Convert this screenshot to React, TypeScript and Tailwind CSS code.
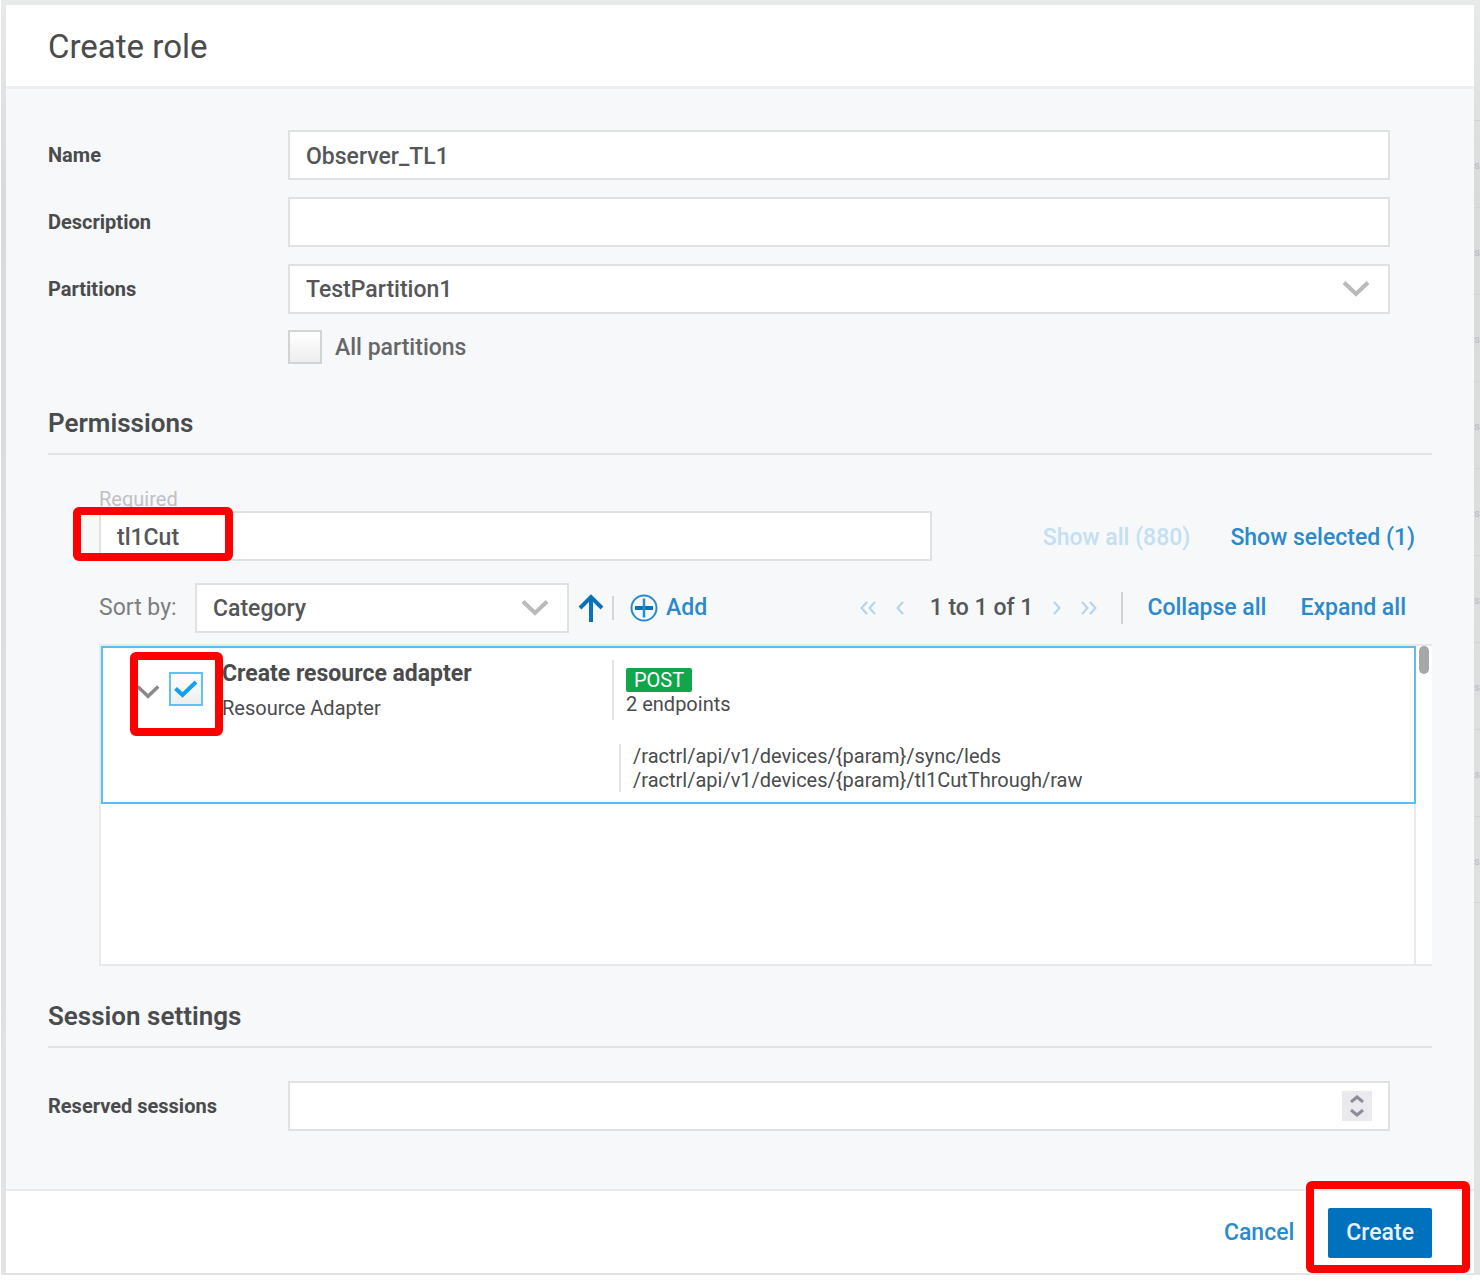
import { useState } from 'react';
import type { ReactNode } from 'react';

const endpoints = [
    '/ractrl/api/v1/devices/{param}/sync/leds',
    '/ractrl/api/v1/devices/{param}/tl1CutThrough/raw',
];

const fieldClass = 'block w-full h-[50px] px-4 pt-[2px] bg-white border-2 border-[#e0e1e1] text-[23px] outline-none';

function Chevron({ className }: { className: string }) {
    return (
        <svg viewBox="0 0 28 18" fill="none" stroke="currentColor" strokeWidth="4" className={className}>
            <path d="M2 2.5 L14 14 L26 2.5" />
        </svg>
    );
}

function Angles({ double = false, right = false }: { double?: boolean; right?: boolean }) {
    return (
        <svg
            viewBox={double ? '0 0 16 14' : '0 0 8 14'}
            fill="none"
            stroke="currentColor"
            strokeWidth="2"
            className={double ? 'w-4 h-[14px]' : 'w-2 h-[14px]'}
        >
            <g transform={right ? `translate(${double ? 16 : 8} 0) scale(-1 1)` : undefined}>
                <path d="M7 1 L1.5 7 L7 13" />
                {double && <path d="M15 1 L9.5 7 L15 13" />}
            </g>
        </svg>
    );
}

function Field({ id, label, children }: { id: string; label: string; children: ReactNode }) {
    return (
        <div className="flex items-center pr-[42px]">
            <label htmlFor={id} className="w-[240px] shrink-0 text-[20px] leading-6 font-bold text-[#4a4b4d]">{label}</label>
            <div className="relative grow">{children}</div>
        </div>
    );
}

function Checkbox({ id, checked, onChange }: { id: string; checked: boolean; onChange: (value: boolean) => void }) {
    return (
        <span className="relative block size-[34px] shrink-0">
            <input
                id={id}
                type="checkbox"
                checked={checked}
                onChange={e => onChange(e.target.checked)}
                className="block size-[34px] appearance-none border-2 border-[#d2d3d3] bg-linear-to-b from-white to-[#eeeeee] checked:border-[#62c0f5]"
            />
            {checked && (
                <svg viewBox="0 0 34 34" fill="none" stroke="#14a0f0" strokeWidth="4" className="absolute inset-0 pointer-events-none">
                    <path d="M6.5 16.5 L13.5 23 L27 10" />
                </svg>
            )}
        </span>
    );
}

function Highlight({ className }: { className: string }) {
    return <div className={`absolute border-8 border-[#ff0000] rounded-md pointer-events-none ${className}`} />;
}

export default function App() {
    const [name, setName] = useState('Observer_TL1');
    const [description, setDescription] = useState('');
    const [allPartitions, setAllPartitions] = useState(false);
    const [filter, setFilter] = useState('tl1Cut');
    const [selected, setSelected] = useState(true);
    const [sessions, setSessions] = useState('');

    return (
        <div className="bg-white pb-2 pl-px font-[Roboto,sans-serif] text-[23px] leading-7 font-medium text-[#555658]">
            <div className="relative bg-linear-to-b from-[#e8e9e9] via-[#d9dada] via-15% to-[#e2e3e3] pt-[5px] pb-[2px] pl-[5px] pr-[6px] overflow-hidden">
                {/* page rows that stick out behind the dialog */}
                <div className="absolute top-[120px] right-0 w-[6px]" aria-hidden="true">
                    {Array.from({ length: 9 }, (_, i) => (
                        <div key={i} className="h-[87px] pt-1 border-t border-[#d2d3d3] last:border-b flex items-center justify-center text-[11px] text-[#bfc0c0]">s</div>
                    ))}
                </div>

                <div className="relative bg-white">
                    <header className="h-[84px] pt-[3px] px-[42px] flex items-center border-b-3 border-[#eeefef]">
                        <h1 className="text-[33px] leading-10 font-normal text-[#4a4b4d]">Create role</h1>
                    </header>

                    <main className="bg-[#f7f8fa] px-[42px] pt-[41px] pb-[58px]">
                        <div className="flex flex-col gap-[17px]">
                            <Field id="name" label="Name">
                                <input id="name" type="text" value={name} onChange={e => setName(e.target.value)} className={fieldClass} />
                            </Field>
                            <Field id="description" label="Description">
                                <input id="description" type="text" value={description} onChange={e => setDescription(e.target.value)} className={fieldClass} />
                            </Field>
                            <Field id="partitions" label="Partitions">
                                <select id="partitions" className={`${fieldClass} appearance-none`}>
                                    <option>TestPartition1</option>
                                </select>
                                <Chevron className="absolute right-5 top-4 w-7 h-[18px] text-[#b9babb] pointer-events-none" />
                            </Field>
                        </div>
                        <div className="ml-[240px] mt-4 flex items-center gap-[13px]">
                            <Checkbox id="all-partitions" checked={allPartitions} onChange={setAllPartitions} />
                            <label htmlFor="all-partitions" className="pt-[2px] text-[#666769]">All partitions</label>
                        </div>

                        <h2 className="mt-[43px] pb-[14px] border-b-2 border-[#e3e4e5] text-[26px] leading-8 font-semibold text-[#4a4b4d]">Permissions</h2>

                        <div className="pl-[51px] pt-8">
                            <label htmlFor="filter" className="block text-[20px] leading-6 font-normal text-[#bfc1c3]">Required</label>
                            <div className="flex items-center justify-between pr-[17px]">
                                <div className="relative w-[833px]">
                                    <input id="filter" type="text" value={filter} onChange={e => setFilter(e.target.value)} className={fieldClass} />
                                    <Highlight className="-left-[26px] -top-1 w-[160px] h-[54px]" />
                                </div>
                                <div className="flex gap-10 pt-[3px]">
                                    <button type="button" disabled className="text-[#c3dff1]">Show all (880)</button>
                                    <button type="button" className="text-[#2b8acb]">Show selected (1)</button>
                                </div>
                            </div>

                            <div className="mt-[22px] flex items-center">
                                <label htmlFor="sort" className="w-24 shrink-0 font-normal text-[#7c7e80]">Sort by:</label>
                                <div className="relative w-[374px]">
                                    <select id="sort" className={`${fieldClass} appearance-none`}>
                                        <option>Category</option>
                                    </select>
                                    <Chevron className="absolute right-5 top-4 w-7 h-[18px] text-[#b9babb] pointer-events-none" />
                                </div>
                                <button type="button" aria-label="Sort ascending" className="ml-[9px] text-[#0a71bb]">
                                    <svg viewBox="0 0 26 28" fill="none" stroke="currentColor" strokeWidth="4" className="block w-[26px] h-7">
                                        <path d="M13 28 V3 M2 14 L13 3 L24 14" />
                                    </svg>
                                </button>
                                <div className="ml-2 w-[2px] h-6 bg-[#d5d6d7]" />
                                <button type="button" className="ml-4 flex items-center gap-2 text-[#2b8acb]">
                                    <svg viewBox="0 0 28 28" fill="none" stroke="currentColor" className="block size-7">
                                        <circle cx="14" cy="14" r="12.5" strokeWidth="2" />
                                        <path d="M5 14 H23" strokeWidth="4" stroke="#0a71bb" />
                                        <path d="M14 4.5 V23.5" strokeWidth="2.5" />
                                    </svg>
                                    Add
                                </button>

                                <div className="ml-auto pr-[26px] flex items-center">
                                    <div className="flex items-center gap-5 text-[#b1d4ec]">
                                        <button type="button" disabled aria-label="First page"><Angles double /></button>
                                        <button type="button" disabled aria-label="Previous page"><Angles /></button>
                                        <span className="pl-[6px] text-[#555658]">1 to 1 of 1</span>
                                        <button type="button" disabled aria-label="Next page"><Angles right /></button>
                                        <button type="button" disabled aria-label="Last page"><Angles double right /></button>
                                    </div>
                                    <div className="mx-6 w-[2px] h-8 bg-[#d0d1d2]" />
                                    <div className="flex gap-[34px] text-[#2b8acb]">
                                        <button type="button">Collapse all</button>
                                        <button type="button">Expand all</button>
                                    </div>
                                </div>
                            </div>

                            <div className="mt-[11px] flex h-[322px] bg-white border-y-2 border-l-2 border-[#e8e9ea]">
                                <div className="grow border-r-2 border-[#e8e9ea]">
                                    <div className="relative -mr-[2px] h-[158px] border-2 border-[#5cbdf3] flex text-[20px] leading-6">
                                        <Chevron className="ml-[33px] mt-9 w-6 h-4 text-[#88898a]" />
                                        <div className="ml-[9px] mt-6">
                                            <Checkbox id="resource-adapter" checked={selected} onChange={setSelected} />
                                        </div>
                                        <label htmlFor="resource-adapter" className="ml-[19px] mt-3 w-[390px] font-normal text-[#4a4b4d]">
                                            <span className="block text-[23px] leading-7 font-bold">Create resource adapter</span>
                                            <span className="block mt-2">Resource Adapter</span>
                                        </label>
                                        <div className="mt-3 font-normal text-[#4a4b4d]">
                                            <div className="h-[60px] pl-3 pt-2 border-l-2 border-[#e3e4e5]">
                                                <span className="block w-[66px] rounded-xs bg-[#10a64a] text-center text-white">POST</span>
                                                <span className="block">2 endpoints</span>
                                            </div>
                                            <div className="mt-6 ml-[7px] pl-3 border-l-2 border-[#e3e4e5]">
                                                {endpoints.map(path => (
                                                    <p key={path}>{path}</p>
                                                ))}
                                            </div>
                                        </div>
                                        <Highlight className="left-[27px] top-1 w-[93px] h-[84px]" />
                                    </div>
                                </div>
                                <div className="w-4 pl-[3px]">
                                    <div className="w-[10px] h-7 rounded-full bg-[#a6a7a8]" />
                                </div>
                            </div>
                        </div>

                        <h2 className="mt-[34px] pb-[14px] border-b-2 border-[#e3e4e5] text-[26px] leading-8 font-semibold text-[#4a4b4d]">Session settings</h2>
                        <div className="mt-[33px]">
                            <Field id="sessions" label="Reserved sessions">
                                <input
                                    id="sessions"
                                    type="number"
                                    value={sessions}
                                    onChange={e => setSessions(e.target.value)}
                                    className={`${fieldClass} [appearance:textfield]`}
                                />
                                <div className="absolute right-[18px] top-[10px] w-[30px] h-[30px] bg-[#e9e9ee] text-[#8d8d99] flex flex-col items-center justify-center gap-[6px]">
                                    <button type="button" aria-label="Increase" onClick={() => setSessions(String(Number(sessions) + 1))}>
                                        <svg viewBox="0 0 14 8" fill="none" stroke="currentColor" strokeWidth="3" className="block w-[14px] h-2">
                                            <path d="M1 7 L7 2 L13 7" />
                                        </svg>
                                    </button>
                                    <button type="button" aria-label="Decrease" onClick={() => setSessions(String(Number(sessions) - 1))}>
                                        <svg viewBox="0 0 14 8" fill="none" stroke="currentColor" strokeWidth="3" className="block w-[14px] h-2">
                                            <path d="M1 1 L7 6 L13 1" />
                                        </svg>
                                    </button>
                                </div>
                            </Field>
                        </div>
                    </main>

                    <footer className="px-[42px] pt-[17px] pb-[15px] flex items-center justify-end gap-[34px] border-t-2 border-[#e8e9ea]">
                        <button type="button" className="text-[#2b8acb]">Cancel</button>
                        <div className="relative">
                            <button type="submit" className="block h-[50px] px-[18px] rounded-xs bg-[#0071bd] text-[#e6f2fa]">Create</button>
                            <Highlight className="-left-[22px] -right-[38px] -top-[27px] -bottom-[15px]" />
                        </div>
                    </footer>
                </div>
            </div>
        </div>
    );
}
